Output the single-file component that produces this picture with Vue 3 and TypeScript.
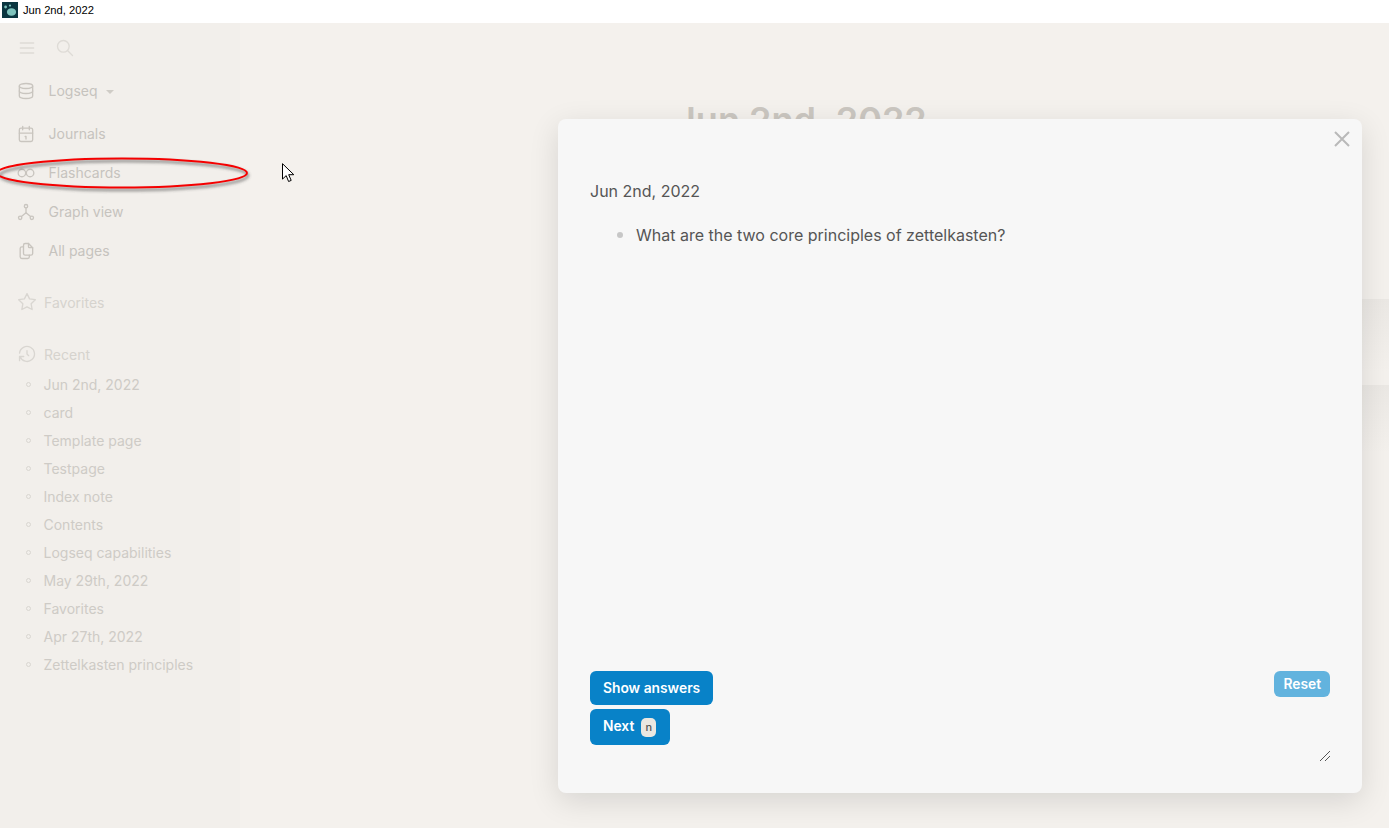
<script setup lang="ts">
interface NavItem { label: string; paths: string[]; caret?: boolean; first?: boolean }
const nav: NavItem[] = [
  { label: 'Logseq', caret: true, first: true, paths: ['M4 6a8 3 0 1 0 16 0a8 3 0 1 0 -16 0', 'M4 6v6a8 3 0 0 0 16 0v-6', 'M4 12v6a8 3 0 0 0 16 0v-6'] },
  { label: 'Journals', paths: ['M6 5h12a2 2 0 0 1 2 2v12a2 2 0 0 1 -2 2h-12a2 2 0 0 1 -2 -2v-12a2 2 0 0 1 2 -2z', 'M16 3v4', 'M8 3v4', 'M4 11h16', 'M11 15h1v3'] },
  { label: 'Flashcards', paths: ['M2.6 12a4.5 4.5 0 1 0 9 0a4.5 4.5 0 1 0 -9 0', 'M12.4 12a4.5 4.5 0 1 0 9 0a4.5 4.5 0 1 0 -9 0'] },
  { label: 'Graph view', paths: ['M10 5a2 2 0 1 0 4 0a2 2 0 1 0 -4 0', 'M3 19a2 2 0 1 0 4 0a2 2 0 1 0 -4 0', 'M17 19a2 2 0 1 0 4 0a2 2 0 1 0 -4 0', 'M6.5 17.5l5.5 -4.5l5.5 4.5', 'M12 7v6'] },
  { label: 'All pages', paths: ['M15 3v4a1 1 0 0 0 1 1h4', 'M18 17h-7a2 2 0 0 1 -2 -2v-10a2 2 0 0 1 2 -2h4l5 5v7a2 2 0 0 1 -2 2z', 'M16 17v2a2 2 0 0 1 -2 2h-7a2 2 0 0 1 -2 -2v-10a2 2 0 0 1 2 -2h2'] },
]
const recent: string[] = ['Jun 2nd, 2022', 'card', 'Template page', 'Testpage', 'Index note', 'Contents', 'Logseq capabilities', 'May 29th, 2022', 'Favorites', 'Apr 27th, 2022', 'Zettelkasten principles']
</script>

<template>
  <div class="window">
    <header class="titlebar">
      <svg class="app-icon" viewBox="0 0 16 16" aria-hidden="true">
        <rect width="16" height="16" fill="#0b3640" />
        <ellipse cx="9.5" cy="10" rx="4.6" ry="3.8" fill="#7fc4bd" />
        <circle cx="3.6" cy="5" r="1.4" fill="#7fc4bd" />
        <circle cx="8" cy="3.6" r="1.1" fill="#7fc4bd" />
      </svg>
      <span>Jun 2nd, 2022</span>
    </header>

    <div class="app">
      <aside class="sidebar">
        <div class="tools">
          <svg class="icon" viewBox="0 0 24 24"><path d="M4 6h16M4 12h16M4 18h16" /></svg>
          <svg class="icon search" viewBox="0 0 24 24"><path d="M3 10a7 7 0 1 0 14 0a7 7 0 1 0 -14 0M21 21l-6 -6" /></svg>
        </div>
        <nav class="nav">
          <a v-for="item in nav" :key="item.label" class="nav-item" :class="{ first: item.first }">
            <svg class="icon" viewBox="0 0 24 24"><path v-for="d in item.paths" :key="d" :d="d" /></svg>
            <span>{{ item.label }}</span>
            <i v-if="item.caret" class="caret"></i>
          </a>
        </nav>
        <div class="section favorites">
          <svg class="icon" viewBox="0 0 24 24"><path d="M12 17.75l-6.172 3.245l1.179 -6.873l-5 -4.867l6.9 -1l3.086 -6.253l3.086 6.253l6.9 1l-5 4.867l1.179 6.873z" /></svg>
          <span>Favorites</span>
        </div>
        <div class="section recent">
          <svg class="icon" viewBox="0 0 24 24"><path d="M12 8v4l2 2M3.05 11a9 9 0 1 1 .5 4m-.5 5v-5h5" /></svg>
          <span>Recent</span>
        </div>
        <ul class="recent-list">
          <li v-for="name in recent" :key="name"><i class="dot"></i>{{ name }}</li>
        </ul>
      </aside>

      <main class="main">
        <h1 class="title">Jun 2nd, 2022</h1>
        <div class="band"></div>
        <div class="band lower"></div>
      </main>
    </div>

    <section class="modal">
      <svg class="close" viewBox="0 0 16 16"><path d="M1 1l14 14M15 1L1 15" /></svg>
      <div class="card-body">
        <div class="card-page">Jun 2nd, 2022</div>
        <div class="card-block"><i class="bullet"></i>What are the two core principles of zettelkasten?</div>
      </div>
      <footer class="card-footer">
        <div class="actions">
          <button class="btn show">Show answers</button>
          <button class="btn next">Next <kbd>n</kbd></button>
        </div>
        <button class="btn reset">Reset</button>
      </footer>
      <svg class="grip" viewBox="0 0 10 10"><path d="M0 10L10 0M5 10l5 -5" /></svg>
    </section>

    <svg class="ellipse" viewBox="0 0 260 50" aria-hidden="true">
      <defs>
        <filter id="soft" x="-5%" y="-30%" width="110%" height="170%"><feGaussianBlur stdDeviation="1.4" /></filter>
      </defs>
      <ellipse cx="124" cy="26.5" rx="124" ry="14.5" fill="none" stroke="#444" stroke-opacity=".6" stroke-width="2.4" filter="url(#soft)" />
      <ellipse cx="122" cy="24" rx="125" ry="14.5" fill="none" stroke="#f50000" stroke-width="1.9" />
    </svg>

    <svg class="cursor" viewBox="0 0 13 20" aria-hidden="true">
      <path d="M.5 .7v15.4l3.7-3.5l2.4 5.9l2.6-1.1l-2.5-5.7h5.1z" fill="#fff" stroke="#000" stroke-width="1" />
    </svg>
  </div>
</template>

<style>
html, body { margin: 0; background: #f4f1ed; }
</style>

<style scoped>
.window {
  position: relative;
  width: 1389px;
  height: 828px;
  overflow: hidden;
  font-family: Inter, "Liberation Sans", sans-serif;
  background: #f4f1ed;
}
.titlebar {
  height: 23px;
  display: flex;
  align-items: center;
  gap: 5px;
  padding: 0 0 3px 2px;
  box-sizing: border-box;
  background: #fff;
  color: #000;
  font: 11.2px "Liberation Sans", sans-serif;
}
.app-icon { width: 16px; height: 16px; }
.app { display: flex; height: 805px; }
.sidebar {
  width: 240px;
  flex: none;
  background: #f2efeb;
  color: #c6c3be;
  font-size: 14px;
}
.icon {
  width: 20px;
  height: 20px;
  flex: none;
  fill: none;
  stroke: #c9c5bf;
  stroke-width: 1.6;
  stroke-linecap: round;
  stroke-linejoin: round;
}
.tools {
  height: 50px;
  display: flex;
  align-items: center;
  gap: 18px;
  padding-left: 17px;
}
.tools .icon { stroke: #dedbd6; }
.nav-item {
  height: 39px;
  display: flex;
  align-items: center;
  padding-left: 16px;
  gap: 12.5px;
}
.nav-item.first { height: 35px; margin-bottom: 6px; }
.caret {
  width: 0;
  height: 0;
  margin-left: -4px;
  margin-top: 2px;
  border: 4px solid transparent;
  border-top: 4px solid #cfccc6;
  border-bottom: 0;
}
.section {
  height: 32px;
  display: flex;
  align-items: center;
  gap: 7px;
  padding-left: 17px;
  color: #d6d3ce;
}
.section .icon { stroke: #d9d6d1; }
.favorites { margin-top: 16px; }
.recent { margin-top: 20px; }
.recent-list {
  list-style: none;
  margin: 0;
  padding: 0 0 0 26px;
  color: #cecbc6;
}
.recent-list li {
  height: 28px;
  display: flex;
  align-items: center;
  gap: 12.5px;
}
.dot {
  width: 5px;
  height: 5px;
  box-sizing: border-box;
  border: 1px solid #d9d6d1;
  border-radius: 50%;
}
.main { flex: 1; display: flex; flex-direction: column; min-width: 0; }
.title {
  margin: 75px 0 0 435px;
  font-size: 36px;
  line-height: 44px;
  font-weight: 600;
  color: #cbc7c1;
}
.band {
  margin: 157px 0 0 auto;
  width: 27px;
  height: 86px;
  flex: none;
  background: linear-gradient(180deg, #ebe8e4 0%, #f4f1ed 85%);
}
.band.lower { margin-top: 0; height: 80px; }
.modal {
  position: absolute;
  left: 558px;
  top: 119px;
  width: 804px;
  height: 674px;
  box-sizing: border-box;
  padding: 62px 32px 48px;
  display: flex;
  flex-direction: column;
  background: #f7f7f7;
  border-radius: 8px;
  box-shadow: 0 8px 30px rgba(0, 0, 0, .12);
  color: #555;
  font-size: 16px;
}
.close {
  position: absolute;
  right: 12px;
  top: 12px;
  width: 16px;
  height: 16px;
  fill: none;
  stroke: #b9b9b9;
  stroke-width: 2;
}
.card-body { flex: 1; }
.card-page { line-height: 20px; }
.card-block {
  margin-top: 24px;
  padding-left: 27px;
  line-height: 20px;
  display: flex;
  align-items: center;
  gap: 13px;
}
.bullet {
  width: 6px;
  height: 6px;
  border-radius: 50%;
  background: #c7c7c7;
}
.card-footer { display: flex; justify-content: space-between; align-items: flex-start; }
.actions { display: flex; flex-direction: column; align-items: flex-start; gap: 4px; }
.btn {
  border: 0;
  padding: 0 13px 1px;
  border-radius: 6px;
  color: #fff;
  font: 600 13.8px Inter, "Liberation Sans", sans-serif;
  background: #0882c8;
  display: flex;
  align-items: center;
}
.show { height: 34px; }
.next { height: 36px; gap: 7px; padding: 0 14px 2px 13px; }
.reset { height: 26px; padding: 0 9px 1px; background: #62b3de; }
kbd {
  width: 15px;
  height: 19px;
  margin-top: 2px;
  border-radius: 5px;
  background: #ebe7e1;
  color: #555;
  font: 500 11px Inter, "Liberation Sans", sans-serif;
  display: flex;
  align-items: center;
  justify-content: center;
}
.grip {
  position: absolute;
  right: 32px;
  bottom: 32px;
  width: 10px;
  height: 10px;
  fill: none;
  stroke: #555;
  stroke-width: 1;
}
.ellipse {
  position: absolute;
  left: 0;
  top: 149px;
  width: 260px;
  height: 50px;
  pointer-events: none;
}
.cursor {
  position: absolute;
  left: 282px;
  top: 163px;
  width: 13px;
  height: 20px;
}
</style>
